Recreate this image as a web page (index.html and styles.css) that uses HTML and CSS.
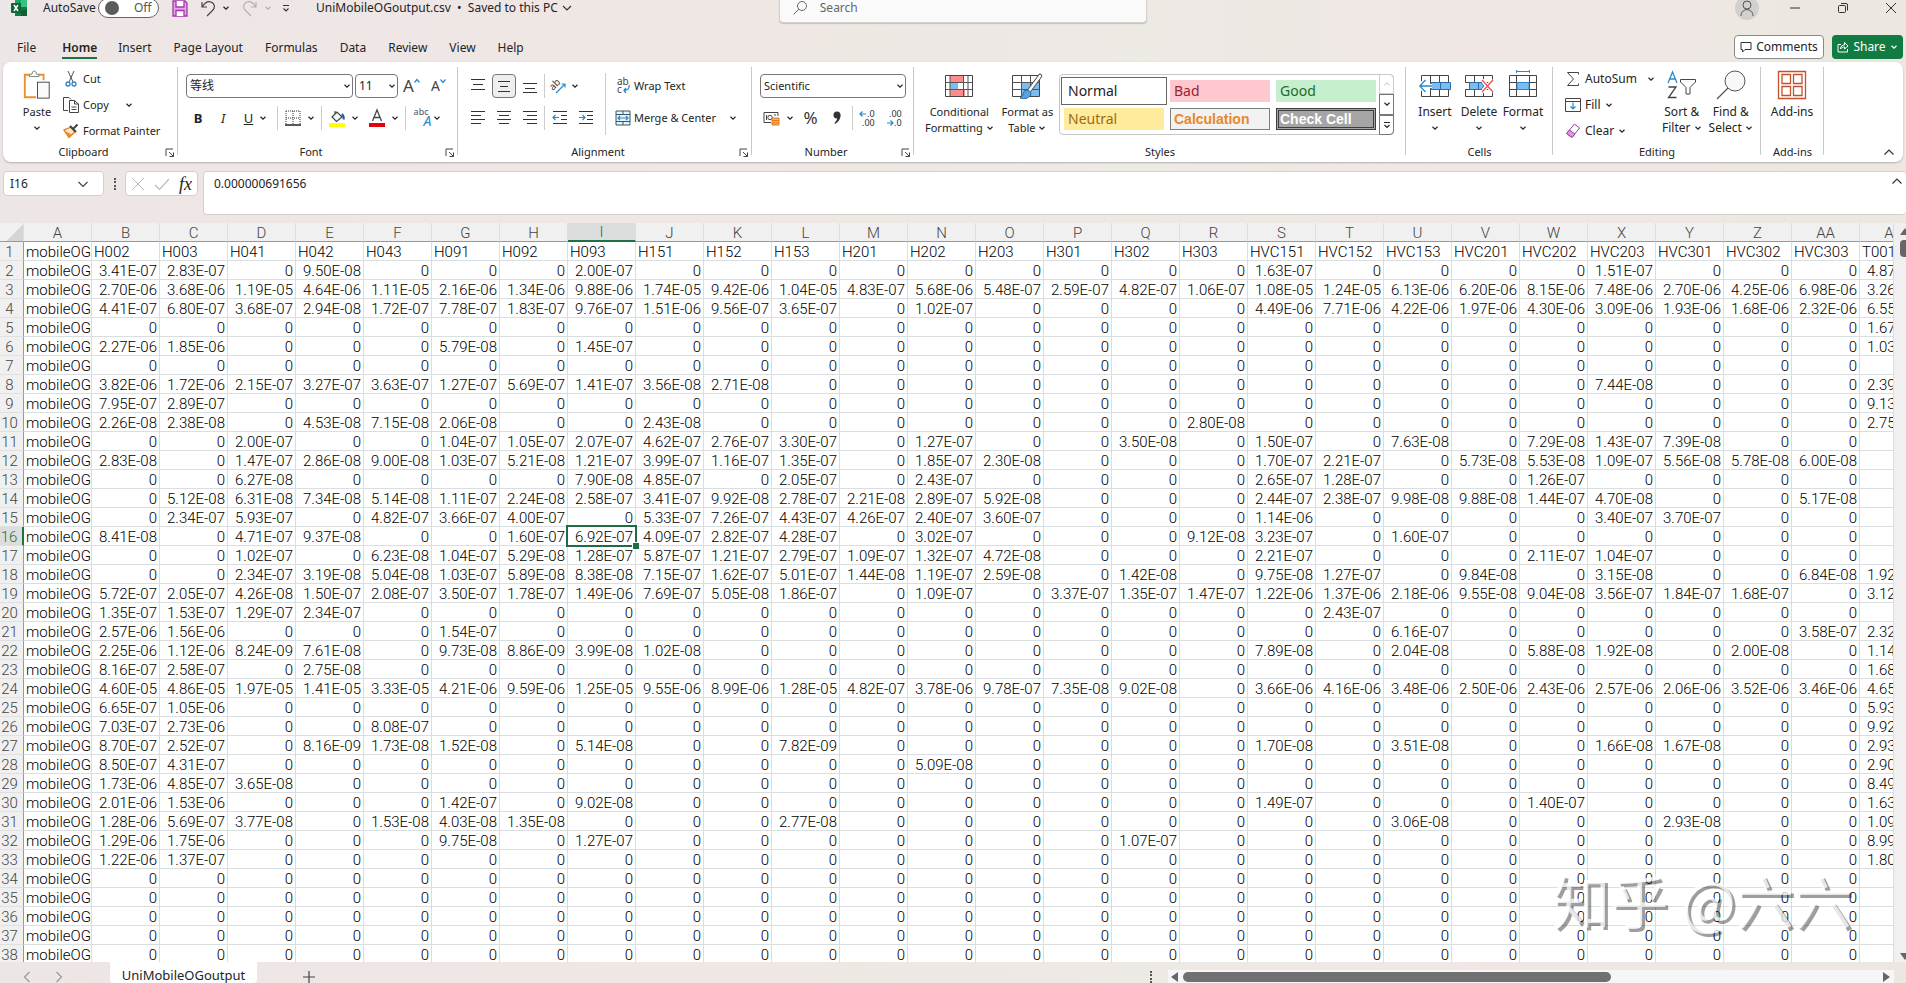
FILE: index.html
```html
<!DOCTYPE html>
<html lang="en">
<head>
<meta charset="utf-8">
<title>UniMobileOGoutput.csv</title>
<link rel="stylesheet" href="styles.css">
</head>
<body>
<svg class="defs" aria-hidden="true">
  <symbol id="caret" viewBox="0 0 8 8"><path d="M1.5 2.8 4 5.2 6.5 2.8" fill="none" stroke="currentColor" stroke-width="1.2"/></symbol>
  <symbol id="launch" viewBox="0 0 10 10"><path d="M1 8V1H8M4 4 8.5 8.5M8.5 4.5V8.5H4.5" fill="none" stroke="#444"/></symbol>
</svg>

<header class="titlebar">
  <svg class="logo" width="16" height="20" viewBox="0 0 16 20"><rect x="4" y="0" width="12" height="18" rx="1" fill="#21a366"/><rect x="10" y="0" width="6" height="9" fill="#33c481"/><rect x="4" y="9" width="12" height="9" fill="#107c41"/><rect x="10" y="12" width="6" height="6" fill="#185c37"/><rect x="0" y="5" width="10" height="10" rx="1" fill="#0e6537"/><path d="M3 7 7 13M7 7 3 13" stroke="#fff" stroke-width="1.5"/></svg>
  <label class="autosave" for="autosave">AutoSave</label>
  <button class="switch" id="autosave" type="button" role="switch" aria-checked="false"><span class="knob"></span>Off</button>
  <button class="tool save" type="button" aria-label="Save"><svg width="16" height="17" viewBox="0 0 16 17"><path d="M1 1H13L15 3V16H1Z" fill="#e3a5e3" stroke="#a238ad" stroke-width="1.3"/><path d="M4 1V7H12V1M4 16V10.500H12V16" fill="#fff" stroke="#a238ad" stroke-width="1.3"/></svg></button>
  <button class="tool undo" type="button" aria-label="Undo"><svg width="16" height="18" viewBox="0 0 16 18"><path d="M2 3V8H7M2.500 7.500C5 3.500 8 2 11 3C15.500 5 15 9 12.500 11.500L7 17" fill="none" stroke="#444" stroke-width="1.2"/></svg><svg width="8" height="8"><use href="#caret"/></svg></button>
  <button class="tool redo" type="button" aria-label="Redo"><svg width="16" height="18" viewBox="0 0 16 18"><path d="M14 3V8H9M13.500 7.500C11 3.500 8 2 5 3C.5 5 1 9 3.500 11.500L9 17" fill="none" stroke="#b5b0b0" stroke-width="1.2"/></svg><svg width="8" height="8"><use href="#caret"/></svg></button>
  <button class="tool more" type="button" aria-label="Customize toolbar"><svg width="10" height="10" viewBox="0 0 10 10"><path d="M2 2.500H8M2.500 5.500 5 8 7.500 5.500" fill="none" stroke="#333" stroke-width="1.1"/></svg></button>
  <button class="docname" type="button">UniMobileOGoutput.csv&nbsp; • &nbsp;Saved to this PC <svg width="10" height="10" viewBox="0 0 10 10"><path d="M1 3 5 7 9 3" fill="none" stroke="#333" stroke-width="1.2"/></svg></button>
  <div class="search">
    <svg width="16" height="16" viewBox="0 0 16 16"><circle cx="10" cy="6" r="4.500" fill="none" stroke="#666"/><path d="M6.800 9.200 1.500 14.500" stroke="#666"/></svg>
    <input type="text" placeholder="Search" aria-label="Search">
  </div>
  <div class="window">
    <button class="avatar" type="button" aria-label="Account"><svg width="24" height="24" viewBox="0 0 24 24"><circle cx="12" cy="12" r="12" fill="#d2d0cf"/><circle cx="12" cy="9" r="4" fill="none" stroke="#555"/><path d="M6 20C6 11.500 18 11.500 18 20" fill="none" stroke="#555"/></svg></button>
    <button type="button" aria-label="Minimize"><svg width="12" height="12" viewBox="0 0 12 12"><path d="M1 6H11" stroke="#333"/></svg></button>
    <button type="button" aria-label="Restore"><svg width="12" height="12" viewBox="0 0 12 12"><rect x="1.500" y="3.500" width="7" height="7" rx="1" fill="none" stroke="#333"/><path d="M4 1.500H9Q10.500 1.500 10.500 3V8.500" fill="none" stroke="#333"/></svg></button>
    <button type="button" aria-label="Close"><svg width="12" height="12" viewBox="0 0 12 12"><path d="M1 1 11 11M11 1 1 11" stroke="#333"/></svg></button>
  </div>
</header>

<nav class="tabs">
  <button type="button">File</button>
  <button type="button" class="active">Home</button>
  <button type="button">Insert</button>
  <button type="button">Page Layout</button>
  <button type="button">Formulas</button>
  <button type="button">Data</button>
  <button type="button">Review</button>
  <button type="button">View</button>
  <button type="button">Help</button>
  <span class="spacer"></span>
  <button type="button" class="comments"><svg width="12" height="12" viewBox="0 0 12 12"><path d="M1 1.500H11V8.500H5L2.500 11V8.500H1Z" fill="none" stroke="#333"/></svg>Comments</button>
  <button type="button" class="share"><svg width="12" height="12" viewBox="0 0 12 12"><path d="M4 3.500H1V11H10.500V8M3.500 8C3.500 5 5.500 4 7.500 4V1.500L11 5 7.500 8V6C6 6 4.500 6.500 3.500 8Z" fill="none" stroke="#fff"/></svg>Share<svg width="8" height="8"><use href="#caret"/></svg></button>
</nav>

<section class="ribbon">
  <div class="group clipboard">
    <div class="body">
      <button type="button" class="big paste"><svg width="28" height="32" viewBox="0 0 28 32"><path d="M6 5H1V29H13M16 5H21V11" fill="none" stroke="#e8912d" stroke-width="2"/><path d="M2.500 6.500H19.500V12H14V27.500H2.500Z" fill="#fff"/><path d="M6 7V4.500H8.500Q9 1 11 1T13.500 4.500H16V7Z" fill="#fff" stroke="#777"/><rect x="14.500" y="13" width="12.500" height="17" fill="#fafafa" stroke="#444"/></svg><span>Paste</span><svg width="8" height="8"><use href="#caret"/></svg></button>
      <div class="stack">
        <button type="button"><svg width="16" height="16" viewBox="0 0 16 16"><path d="M5 0 10 11M11 0 6 11" stroke="#555" fill="none"/><circle cx="5" cy="13" r="2" fill="none" stroke="#2b88c8" stroke-width="1.300"/><circle cx="11" cy="13" r="2" fill="none" stroke="#2b88c8" stroke-width="1.300"/></svg>Cut</button>
        <button type="button"><svg width="16" height="16" viewBox="0 0 16 16"><path d="M5 13.500H.5V.5H6L8 2.500" fill="none" stroke="#444"/><path d="M6.500 3.500H11.500L15.500 7V15.500H6.500ZM11.500 3.500V7H15.500M8.500 10H13.500M8.500 12.500H13.500" fill="none" stroke="#444"/></svg>Copy<svg class="far" width="8" height="8"><use href="#caret"/></svg></button>
        <button type="button"><svg width="16" height="16" viewBox="0 0 16 16"><path d="M8 4 1 7 6 14.500 12 9Z" fill="#fbe3c6" stroke="#e07a1a" stroke-width="1.300"/><path d="M2 8 6 14.500 9 11.500Z" fill="#e8912d"/><path d="M7 3 13 9M10 6 14.500 1.500" stroke="#444" stroke-width="2"/></svg>Format Painter</button>
      </div>
    </div>
    <div class="caption launcher">Clipboard<svg width="10" height="10"><use href="#launch"/></svg></div>
  </div>

  <div class="group font">
    <div class="body rows">
      <div class="row">
        <label class="combo face"><select aria-label="Font"><option>等线</option></select><svg width="8" height="8"><use href="#caret"/></svg></label>
        <label class="combo size"><select aria-label="Font size"><option>11</option></select><svg width="8" height="8"><use href="#caret"/></svg></label>
        <button type="button" class="ic grow" aria-label="Increase font size"><span>A</span><svg width="6" height="6" viewBox="0 0 6 6"><path d="M.5 4.500 3 1.500 5.500 4.500" fill="none" stroke="#2b88c8" stroke-width="1.200"/></svg></button>
        <button type="button" class="ic shrink" aria-label="Decrease font size"><span>A</span><svg width="6" height="6" viewBox="0 0 6 6"><path d="M.5 1.500 3 4.500 5.500 1.500" fill="none" stroke="#2b88c8" stroke-width="1.200"/></svg></button>
      </div>
      <div class="row marks">
        <button type="button" class="ic"><b>B</b></button>
        <button type="button" class="ic"><i>I</i></button>
        <button type="button" class="ic split"><u>U</u><svg width="8" height="8"><use href="#caret"/></svg></button>
        <span class="bar"></span>
        <button type="button" class="ic split" aria-label="Borders"><svg width="16" height="16" viewBox="0 0 16 16"><path d="M1 1H15M1 1V14M15 1V14M8 1V14M1 8H15" fill="none" stroke="#333" stroke-dasharray="1 1"/><path d="M0 15H16" stroke="#222" stroke-width="1.500"/></svg><svg width="8" height="8"><use href="#caret"/></svg></button>
        <span class="bar"></span>
        <button type="button" class="ic split" aria-label="Fill color"><svg width="16" height="18" viewBox="0 0 16 18"><path d="M6 2V5M3 8 8 3 13 8 7.500 12.500Z" fill="#f5f5f5" stroke="#444" stroke-width="1.200"/><path d="M13 5Q15.500 8 14.500 10.500" fill="none" stroke="#2455a4" stroke-width="2"/><rect y="14" width="16" height="4" fill="#ff0"/></svg><svg width="8" height="8"><use href="#caret"/></svg></button>
        <button type="button" class="ic split" aria-label="Font color"><svg width="16" height="18" viewBox="0 0 16 18"><path d="M3.500 12 8 1 12.500 12M5 8.500H11" fill="none" stroke="#444" stroke-width="1.300"/><rect y="14" width="16" height="4" fill="#e3000b"/></svg><svg width="8" height="8"><use href="#caret"/></svg></button>
        <span class="bar"></span>
        <button type="button" class="ic split phonetic" aria-label="Phonetic guide"><span class="abc">abc</span><i class="blue">A</i><svg width="8" height="8"><use href="#caret"/></svg></button>
      </div>
    </div>
    <div class="caption launcher">Font<svg width="10" height="10"><use href="#launch"/></svg></div>
  </div>

  <div class="group alignment">
    <div class="body">
      <div class="rows">
        <div class="row">
          <button type="button" class="al" aria-label="Top align"><svg width="14" height="14" viewBox="0 0 14 14"><path d="M0 .5H14M2 5.500H12M0 10.500H14" stroke="#333"/></svg></button>
          <button type="button" class="al on" aria-label="Middle align"><svg width="14" height="14" viewBox="0 0 14 14"><path d="M1 2.500H13M3 7.500H11M1 12.500H13" stroke="#333"/></svg></button>
          <button type="button" class="al" aria-label="Bottom align"><svg width="14" height="14" viewBox="0 0 14 14"><path d="M0 4.500H14M2 9.500H12M0 13.500H14" stroke="#333"/></svg></button>
          <span class="bar"></span>
          <button type="button" class="al wide" aria-label="Orientation"><svg width="16" height="16" viewBox="0 0 16 16"><path d="M5 15 14 6M10.500 6H14V9.500" fill="none" stroke="#2b88c8" stroke-width="1.200"/><text x="-1" y="10" font-size="10" transform="rotate(-45 4 8)" fill="#444">ab</text></svg><svg width="8" height="8"><use href="#caret"/></svg></button>
        </div>
        <div class="row">
          <button type="button" class="al" aria-label="Align left"><svg width="14" height="14" viewBox="0 0 14 14"><path d="M0 .5H14M0 4.500H10M0 8.500H14M0 12.500H10" stroke="#333"/></svg></button>
          <button type="button" class="al" aria-label="Center"><svg width="14" height="14" viewBox="0 0 14 14"><path d="M0 .5H14M2 4.500H12M0 8.500H14M2 12.500H12" stroke="#333"/></svg></button>
          <button type="button" class="al" aria-label="Align right"><svg width="14" height="14" viewBox="0 0 14 14"><path d="M0 .5H14M4 4.500H14M0 8.500H14M4 12.500H14" stroke="#333"/></svg></button>
          <span class="bar"></span>
          <button type="button" class="al" aria-label="Decrease indent"><svg width="16" height="14" viewBox="0 0 16 14"><path d="M1 .5H15M9 4.500H15M9 8.500H15M1 12.500H15" stroke="#333"/><path d="M7 6.500H1M3.500 4 1 6.500 3.500 9" fill="none" stroke="#2b88c8" stroke-width="1.200"/></svg></button>
          <button type="button" class="al" aria-label="Increase indent"><svg width="16" height="14" viewBox="0 0 16 14"><path d="M1 .5H15M9 4.500H15M9 8.500H15M1 12.500H15" stroke="#333"/><path d="M1 6.500H7M4.500 4 7 6.500 4.500 9" fill="none" stroke="#2b88c8" stroke-width="1.200"/></svg></button>
        </div>
      </div>
      <span class="bar tall"></span>
      <div class="rows merge">
        <button type="button" class="line"><svg width="16" height="18" viewBox="0 0 16 18"><text x="2" y="8" font-size="10" fill="#444">ab</text><text x="2" y="16" font-size="10" fill="#444">c</text><path d="M14 8Q15 13 9 13.500M11 11 9 13.500 11 16" fill="none" stroke="#2b88c8" stroke-width="1.300"/></svg>Wrap Text</button>
        <button type="button" class="line"><svg width="16" height="16" viewBox="0 0 16 16"><path d="M1 1H15V15H1ZM1 4.500H15M1 11.500H15M8 1V4.500M8 11.500V15" fill="#eaf4fb" stroke="#33566b"/><path d="M3 8H13M5 6 3 8 5 10M11 6 13 8 11 10" fill="none" stroke="#2b88c8" stroke-width="1.200"/></svg>Merge &amp; Center<svg class="far" width="8" height="8"><use href="#caret"/></svg></button>
      </div>
    </div>
    <div class="caption launcher">Alignment<svg width="10" height="10"><use href="#launch"/></svg></div>
  </div>

  <div class="group number">
    <div class="body rows">
      <label class="combo"><select aria-label="Number format"><option>Scientific</option></select><svg width="8" height="8"><use href="#caret"/></svg></label>
      <div class="row formats">
        <button type="button" class="ic split" aria-label="Accounting format"><svg width="17" height="15" viewBox="0 0 17 15"><path d="M8 11.500H1V1.500H15V5" fill="none" stroke="#444"/><circle cx="7" cy="6.500" r="2.200" fill="none" stroke="#444"/><path d="M3.500 4V9M11 4H13" stroke="#444"/><path d="M9 7V14H16V7Z" fill="#f6b26b" stroke="#e07a1a"/><path d="M9 9.500H16M9 12H16" stroke="#e07a1a"/></svg><svg width="8" height="8"><use href="#caret"/></svg></button>
        <button type="button" class="ic pct">%</button>
        <button type="button" class="ic" aria-label="Comma style"><svg width="10" height="14" viewBox="0 0 10 14"><circle cx="5" cy="4" r="3.500" fill="#333"/><path d="M8.500 4Q8.500 10 3 13L2.500 12Q5.500 9.500 5.500 6Z" fill="#333"/></svg></button>
        <span class="bar"></span>
        <button type="button" class="ic" aria-label="Increase decimal"><svg width="16" height="18" viewBox="0 0 16 18"><text x="8" y="8" font-size="9" fill="#333">.0</text><text x="3" y="17" font-size="9" fill="#333">.00</text><path d="M7 5H1M3.500 2.500 1 5 3.500 7.500" fill="none" stroke="#2b88c8" stroke-width="1.200"/></svg></button>
        <button type="button" class="ic" aria-label="Decrease decimal"><svg width="16" height="18" viewBox="0 0 16 18"><text x="3" y="8" font-size="9" fill="#333">.00</text><text x="8" y="17" font-size="9" fill="#333">.0</text><path d="M1 14H7M4.500 11.500 7 14 4.500 16.500" fill="none" stroke="#2b88c8" stroke-width="1.200"/></svg></button>
      </div>
    </div>
    <div class="caption launcher">Number<svg width="10" height="10"><use href="#launch"/></svg></div>
  </div>

  <div class="group styles">
    <div class="body">
      <button type="button" class="big cond"><svg width="28" height="28" viewBox="0 0 28 28"><path d="M.5 4.500H27.500V25.500H.5Z" fill="#fff" stroke="#444"/><path d="M5 5H18V11H5ZM5 19H20V25H5Z" fill="#ff8c8c"/><path d="M5 12H13V18H5Z" fill="#7cbcf0"/><path d="M.5 11.500H27.500M.5 18.500H27.500M5 4.500V25.500M18.500 4.500V25.500M23 4.500V25.500" fill="none" stroke="#555"/></svg><span>Conditional</span><span>Formatting <svg width="8" height="8"><use href="#caret"/></svg></span></button>
      <button type="button" class="big"><svg width="30" height="28" viewBox="0 0 30 28"><path d="M.5 4.500H27.500V25.500H.5Z" fill="#fff" stroke="#444"/><path d="M10 11H27V25H10Z" fill="#7cbcf0"/><path d="M.5 11.500H27.500M.5 18.500H27.500M9.500 4.500V25.500M18.500 4.500V25.500" fill="none" stroke="#555"/><path d="M28 5 17 20" stroke="#555" stroke-width="4.500" stroke-linecap="round"/><path d="M28 5 17 20" stroke="#fff" stroke-width="2.500" stroke-linecap="round"/><path d="M15 19Q20 20 18.500 24.500 15 29 8 27 11.500 25 11.500 22T15 19Z" fill="#5ba3dc" stroke="#2b6ea8"/></svg><span>Format as</span><span>Table <svg width="8" height="8"><use href="#caret"/></svg></span></button>
      <div class="gallery">
        <div class="swatches">
          <button type="button" class="normal">Normal</button>
          <button type="button" class="bad">Bad</button>
          <button type="button" class="good">Good</button>
          <button type="button" class="neutral">Neutral</button>
          <button type="button" class="calc">Calculation</button>
          <button type="button" class="check">Check Cell</button>
        </div>
        <div class="steps">
          <button type="button" class="off" aria-label="Previous styles"><svg width="8" height="8" viewBox="0 0 8 8"><path d="M1.500 5.200 4 2.800 6.500 5.200" fill="none" stroke="currentColor"/></svg></button>
          <button type="button" aria-label="Next styles"><svg width="8" height="8"><use href="#caret"/></svg></button>
          <button type="button" aria-label="All styles"><svg width="8" height="10" viewBox="0 0 8 10"><path d="M1 2.500H7M1.500 5 4 7.500 6.500 5" fill="none" stroke="currentColor" stroke-width="1.200"/></svg></button>
        </div>
      </div>
    </div>
    <div class="caption">Styles</div>
  </div>

  <div class="group cells">
    <div class="body">
      <button type="button" class="big"><svg width="32" height="28" viewBox="0 0 32 28"><path d="M2.500 4.500H29.500V25.500H2.500ZM11.500 4.500V25.500M20.500 4.500V25.500" fill="#fff" stroke="#444"/><path d="M12 11.500H31.500V18.500H12Z" fill="#7cbcf0" stroke="#2b6ea8"/><path d="M21.500 11.500V18.500" stroke="#2b6ea8"/><path d="M1 15H13M6.500 9 .8 15 6.500 21" fill="none" stroke="#fff" stroke-width="4"/><path d="M1 15H13M6.500 9 .8 15 6.500 21" fill="none" stroke="#2b88c8" stroke-width="1.300"/></svg><span>Insert</span><svg width="8" height="8"><use href="#caret"/></svg></button>
      <button type="button" class="big"><svg width="32" height="28" viewBox="0 0 32 28"><path d="M2.500 4.500H29.500V11.500H2.500ZM2.500 18.500H29.500V25.500H2.500ZM11.500 4.500V11.500M20.500 4.500V11.500M11.500 18.500V25.500M20.500 18.500V25.500" fill="#fff" stroke="#444"/><path d="M6.500 11.500H18L21 15 18 18.500H6.500ZM15.500 11.500V18.500" fill="#7cbcf0" stroke="#2b6ea8"/><path d="M19 9 30 21M30 9 19 21" stroke="#fff" stroke-width="3.500"/><path d="M19 9 30 21M30 9 19 21" stroke="#ef5350" stroke-width="1.300"/></svg><span>Delete</span><svg width="8" height="8"><use href="#caret"/></svg></button>
      <button type="button" class="big"><svg width="28" height="28" viewBox="0 0 28 28"><path d="M.5 4.500H27.500V25.500H.5ZM.5 11.500H27.500M.5 18.500H27.500M7.500 4.500V25.500M20.500 4.500V25.500" fill="#fff" stroke="#444"/><path d="M8 11.500H20V18.500H8Z" fill="#7cbcf0" stroke="#2b88c8"/><path d="M7 .5H21M7.500 -1V2M20.500 -1V2" stroke="#2b88c8"/></svg><span>Format</span><svg width="8" height="8"><use href="#caret"/></svg></button>
    </div>
    <div class="caption">Cells</div>
  </div>

  <div class="group editing">
    <div class="body">
      <div class="stack">
        <button type="button"><svg width="16" height="16" viewBox="0 0 16 16"><path d="M13.500 3.500V1.500H2.500L8.500 8 2.500 14.500H13.500V12.500" fill="none" stroke="#444"/></svg>AutoSum<svg class="far" width="8" height="8"><use href="#caret"/></svg></button>
        <button type="button"><svg width="16" height="16" viewBox="0 0 16 16"><path d="M.5 1.500H15.500V14.500H.5ZM.5 4.500H15.500" fill="none" stroke="#444"/><path d="M8 5.500V12M5.500 9.500 8 12 10.500 9.500" fill="none" stroke="#2b88c8" stroke-width="1.200"/></svg>Fill<svg width="8" height="8"><use href="#caret"/></svg></button>
        <button type="button"><svg width="16" height="16" viewBox="0 0 16 16"><path d="M9.500 1 14.500 5 7 14.500 1.500 10.500Z" fill="#fff" stroke="#9a3fa5"/><path d="M4.500 7 10 11 7 14.500 1.500 10.500Z" fill="#d99ae0" stroke="#9a3fa5"/></svg>Clear<svg width="8" height="8"><use href="#caret"/></svg></button>
      </div>
      <button type="button" class="big sort"><svg width="30" height="28" viewBox="0 0 30 28"><path d="M1 12 5.500 1 10 12M2.500 8H8.500" fill="none" stroke="#2b88c8" stroke-width="1.300"/><path d="M1.500 16H9L1.500 26.500H9.500" fill="none" stroke="#444" stroke-width="1.300"/><path d="M13.500 8.500H28.500V11L23 16.500V23H19V16.500L13.500 11Z" fill="#fff" stroke="#444"/></svg><span>Sort &amp;</span><span>Filter <svg width="8" height="8"><use href="#caret"/></svg></span></button>
      <button type="button" class="big"><svg width="30" height="30" viewBox="0 0 30 30"><circle cx="19" cy="11" r="10" fill="#f8f8f8" stroke="#555"/><path d="M12 18 1 29" stroke="#555" stroke-width="1.200"/></svg><span>Find &amp;</span><span>Select <svg width="8" height="8"><use href="#caret"/></svg></span></button>
    </div>
    <div class="caption">Editing</div>
  </div>

  <div class="group addins">
    <div class="body">
      <button type="button" class="big"><svg width="28" height="28" viewBox="0 0 28 28"><path d="M.5 .5H27.500V27.500H.5ZM4 3.500H12.500V12.500H4ZM15.500 3.500H24V12.500H15.500ZM4 15.500H12.500V24.500H4ZM15.500 15.500H24V24.500H15.500Z" fill="#fff" stroke="#c4512d" stroke-width="1.300"/></svg><span>Add-ins</span></button>
    </div>
    <div class="caption">Add-ins</div>
  </div>
  <button type="button" class="collapse" aria-label="Collapse the ribbon"><svg width="12" height="12" viewBox="0 0 12 12"><path d="M1.500 8.500 6 4 10.500 8.500" fill="none" stroke="#333" stroke-width="1.200"/></svg></button>
</section>

<section class="formula">
  <label class="namebox"><input type="text" value="I16" aria-label="Name box"><svg width="12" height="12" viewBox="0 0 12 12"><path d="M1.500 4 6 8.500 10.500 4" fill="none" stroke="#444" stroke-width="1.200"/></svg></label>
  <span class="dots"></span>
  <div class="fx">
    <button type="button" aria-label="Cancel"><svg width="14" height="14" viewBox="0 0 14 14"><path d="M1 1 13 13M13 1 1 13" stroke="#bbb"/></svg></button>
    <button type="button" aria-label="Enter"><svg width="16" height="14" viewBox="0 0 16 14"><path d="M1 8 5.500 12.500 15 2" fill="none" stroke="#bbb" stroke-width="1.200"/></svg></button>
    <button type="button" class="fn" aria-label="Insert function"><i>fx</i></button>
  </div>
  <div class="entry">
    <input type="text" value="0.000000691656" aria-label="Formula bar">
    <button type="button" aria-label="Collapse formula bar"><svg width="12" height="12" viewBox="0 0 12 12"><path d="M1.500 8.500 6 4 10.500 8.500" fill="none" stroke="#333" stroke-width="1.200"/></svg></button>
  </div>
</section>

<main class="sheet">
  <div class="grid-view"><table class="grid" id="grid"></table></div>
  <div class="vscroll"><span class="arrow up"></span><span class="thumb"></span><span class="arrow down"></span></div>
  <div class="watermark">知乎 @六六</div>
</main>

<footer class="sheetbar">
  <button type="button" aria-label="Previous sheet"><svg width="8" height="12" viewBox="0 0 8 12"><path d="M6.500 1 1.500 6 6.500 11" fill="none" stroke="#999" stroke-width="1.200"/></svg></button>
  <button type="button" aria-label="Next sheet"><svg width="8" height="12" viewBox="0 0 8 12"><path d="M1.500 1 6.500 6 1.500 11" fill="none" stroke="#999" stroke-width="1.200"/></svg></button>
  <button type="button" class="sheet-tab">UniMobileOGoutput</button>
  <button type="button" class="add" aria-label="New sheet"><svg width="12" height="12" viewBox="0 0 12 12"><path d="M6 0V12M0 6H12" stroke="#444" stroke-width="1.200"/></svg></button>
  <span class="spacer"></span>
  <span class="dots"></span>
  <div class="hscroll"><span class="arrow left"></span><span class="thumb"></span><span class="arrow right"></span></div>
</footer>
<script src="grid.js"></script>
</body>
</html>
```
FILE: styles.css
```css
* { box-sizing: border-box; }

body {
  margin: 0;
  height: 100vh;
  display: flex;
  flex-direction: column;
  overflow: hidden;
  font: 12px/16px "Noto Sans", "Noto Sans CJK SC", sans-serif;
  color: #242424;
  background: linear-gradient(90deg, #ede6e6, #efe7e4 30%, #ede9e3 60%, #f0e7e5 78%, #ece7e1);
}

button, input, select {
  font: inherit;
  color: inherit;
  border: 0;
  background: none;
  padding: 0;
  margin: 0;
}

button {
  display: flex;
  align-items: center;
  justify-content: center;
  white-space: nowrap;
}

svg { flex: none; overflow: visible; }
.defs { display: none; }
.spacer { flex: 1; }

/* Title bar */
.titlebar {
  height: 16px;
  display: flex;
  align-items: center;
  padding: 0 9px 0 11px;
  flex: none;
}
.autosave { width: 55px; margin-left: 16px; }
.switch {
  width: 61px;
  height: 20px;
  gap: 15px;
  justify-content: flex-start;
  padding-left: 6px;
  border: 1px solid #666;
  border-radius: 10px;
  background: #fff;
  color: #555;
}
.knob { width: 14px; height: 14px; border-radius: 50%; background: #5c5c5c; }
.tool { gap: 6px; }
.save { margin-left: 13px; }
.undo { margin-left: 12px; }
.redo { margin-left: 12px; }
.redo svg:last-child { color: #b5b0b0; }
.more { margin-left: 9px; }
.docname { margin-left: 25px; gap: 4px; }
.search {
  width: 368px;
  height: 30px;
  margin-left: 207px;
  padding: 0 12px;
  display: flex;
  align-items: center;
  gap: 12px;
  background: #fafafa;
  border: 1px solid #d5d0ce;
  border-radius: 4px;
  box-shadow: 0 1px 1px #c4bfbd;
}
.search input { flex: 1; }
.search input::placeholder { color: #666; opacity: 1; }
.window { margin-left: auto; display: flex; gap: 36px; }
.window .avatar { margin-right: -6px; }

/* Ribbon tabs */
.tabs {
  height: 30px;
  margin-top: 16px;
  padding: 0 3px 0 17px;
  display: flex;
  align-items: center;
  gap: 22px;
  flex: none;
}
.tabs button { height: 24px; border-bottom: 2px solid transparent; border-top: 4px solid transparent; }
.tabs .active { font-weight: 600; border-bottom-color: #1e7145; margin: 0 -1px 0 4px; }
.tabs .comments, .tabs .share { height: 24px; gap: 4px; border-radius: 4px; }
.tabs .comments { width: 90px; border: 1px solid #8a8a8a; background: #fff; margin-right: -14px; }
.tabs .share { width: 71px; border: 0; background: #107c41; color: #fff; }

/* Ribbon */
.ribbon {
  height: 100px;
  margin: 0 3px;
  display: flex;
  flex: none;
  font-size: 11px;
  background: #fff;
  border-radius: 8px;
  box-shadow: 0 1px 2px #b8b0ad;
}
.group {
  position: relative;
  display: flex;
  flex-direction: column;
  flex: none;
}
.group::after {
  content: "";
  position: absolute;
  top: 5px;
  bottom: 7px;
  right: 0;
  width: 1px;
  background: #c8c8c8;
}
.body { height: 82px; display: flex; }
.caption { text-align: center; position: relative; }
.launcher { padding-right: 14px; }
.caption svg { position: absolute; right: 3px; top: 4px; }

.clipboard { width: 175px; }
.font { width: 280px; }
.alignment { width: 294px; }
.number { width: 162px; }
.styles { width: 492px; }
.cells { width: 147px; }
.editing { width: 208px; }
.addins { width: 63px; }
.cells .body, .editing .body, .addins .body { font-size: 12px; }

.stack { display: flex; flex-direction: column; padding-top: 4px; }
.stack button { height: 26px; gap: 4px; justify-content: flex-start; }
.stack .far { margin-left: 12px; }
.far { margin-left: 8px; }

.big { flex-direction: column; justify-content: flex-start; padding-top: 8px; }
.big > svg:first-child { height: 30px; margin-bottom: 4px; }
.big > svg:last-child { margin-top: 4px; }
.paste { width: 36px; margin: 0 8px 0 16px; }

.rows { display: flex; flex-direction: column; gap: 8px; padding-top: 12px; }
.row { display: flex; align-items: center; height: 24px; }
.font .rows, .font .body { padding-left: 8px; }
.number .body { padding: 12px 8px 0; }

.combo { position: relative; display: flex; height: 24px; }
.combo select {
  appearance: none;
  width: 100%;
  padding: 0 3px;
  border: 1px solid #777;
  border-radius: 4px;
  background: #fff;
}
.combo svg { position: absolute; right: 2px; top: 8px; }
.face { width: 167px; margin-right: 2px; font-size: 12px; }
.size { width: 43px; font-size: 12px; }

.ic { width: 24px; height: 24px; gap: 6px; }
.ic b, .ic i, .ic u { font-size: 13px; }
.split { width: 36px; }
.grow { font-size: 17px; width: 27px; gap: 0; align-items: flex-start; padding-top: 4px; color: #444; }
.shrink { font-size: 14px; width: 27px; gap: 0; align-items: flex-start; padding-top: 4px; color: #444; }
.bar { width: 1px; height: 24px; background: #ccc; }
.tall { height: 62px; margin-top: 11px; }
.marks { gap: 3px; padding-left: 1px; }
.marks .ic { width: 22px; }
.marks .ic.split { width: 37px; }
.phonetic { gap: 0; }
.phonetic .abc { font-size: 9px; align-self: flex-start; line-height: 12px; color: #555; }
.phonetic .blue { color: #2b88c8; margin: 6px 2px 0 -5px; font-size: 14px; }

.alignment .row { padding-left: 8px; }
.al { width: 24px; height: 24px; margin-right: 2px; gap: 4px; border-radius: 4px; }
.al.on { background: #eee; border: 1px solid #777; }
.alignment .bar { margin-right: 3px; }
.al.wide { width: 34px; }
.alignment .tall { margin: 11px 9px 0 5px; }
.line { height: 24px; gap: 3px; justify-content: flex-start; }
.line .far { margin-left: 10px; }

.formats { justify-content: space-between; }
.pct { font-size: 17px; color: #333; }

.cond { margin: 0 8px 0 11px; }
.gallery {
  display: flex;
  flex: none;
  width: 335px;
  height: 61px;
  margin: 12px 0 0 auto;
  border: 1px solid #c6c6c6;
  border-radius: 4px;
}
.styles .body { padding-right: 12px; }
.swatches {
  flex: 1;
  display: grid;
  grid-template-columns: repeat(3, 1fr);
  gap: 6px 6px;
  padding: 5px 4px;
}
.swatches button { justify-content: flex-start; padding-left: 4px; font-size: 14px; height: 22px; }
.normal { outline: 1px solid #666; outline-offset: 2px; }
.bad { background: #ffc7ce; color: #9c2230; }
.good { background: #c6efce; color: #1e6b2a; }
.neutral { background: #ffeb9c; color: #9c6a12; }
.swatches .calc, .swatches .check { font: 700 14px/16px "Liberation Sans", sans-serif; }
.swatches .calc { background: #f2f2f2; color: #e8872a; border: 1px solid #7f7f7f; padding-left: 3px; }
.swatches .check { background: #a5a5a5; color: #fff; border: 3px double #3f3f3f; padding-left: 1px; }
.steps { width: 15px; display: flex; flex-direction: column; margin: -1px; }
.steps button { flex: 1; border: 1px solid #777; }
.steps .off { color: #bbb; border-color: #ccc; border-radius: 0 4px 0 0; }
.steps button:last-child { border-radius: 0 0 4px 0; }

.cells .body { padding-left: 7px; }
.cells .big { width: 44px; }
.editing .stack { width: 98px; padding-left: 12px; }
.editing .stack .far { margin-left: 6px; }
.sort { margin: 0 7px 0 11px; }
.addins .big { width: 62px; }
.collapse { margin: auto 8px 4px auto; }

/* Formula bar */
.formula {
  display: flex;
  align-items: flex-start;
  padding: 9px 0 8px 3px;
  flex: none;
}
.namebox, .fx, .entry {
  display: flex;
  align-items: center;
  background: #fff;
  border: 1px solid #d4cfcd;
  border-radius: 4px;
}
.namebox { width: 101px; height: 25px; padding: 0 14px 0 6px; }
.namebox input { flex: 1; min-width: 0; }
.dots { border-left: 2px dotted #555; height: 12px; }
.formula .dots { margin: 7px 9px 0 10px; }
.fx { width: 73px; height: 25px; justify-content: space-between; padding: 0 5px; }
.fn { font: 18px/20px "Liberation Serif", serif; }
.entry { flex: 1; height: 44px; margin-left: 5px; padding: 0 3px 0 10px; align-items: flex-start; border-right: 0; }
.entry input { flex: 1; height: 22px; }
.entry button { padding-top: 3px; }

/* Worksheet */
.sheet { flex: 1; min-height: 0; display: flex; position: relative; }
.grid-view { flex: 1; min-width: 0; overflow: hidden; background: #fff; }
.grid {
  table-layout: fixed;
  width: 1928px;
  border-spacing: 0;
  font: 300 15px/15px Roboto, "Noto Sans", sans-serif;
  color: #000;
}
.grid th, .grid td { padding: 3px 2px 0; height: 19px; white-space: nowrap; }
.grid td { text-align: right; border-right: 1px solid #d9dfe0; border-bottom: 1px solid #d9dfe0; }
.grid th { font-weight: 300; color: #444; background: #f0f0f0; text-align: center; }
.grid thead th { border-bottom: 1px solid #999; border-right: 1px solid #dedede; }
.grid tbody th { border-right: 1px solid #999; border-bottom: 1px solid #e0e0e0; padding: 3px 4px 0 0; }
.grid .corner { width: 24px; background: linear-gradient(135deg, #f0f0f0 60%, #d5d5d5 60%); }
.grid td.text { text-align: left; }
.grid thead th.current { background: #dcdedd; color: #1e7145; border-bottom: 2px solid #1e7145; padding-top: 2px; }
.grid tbody th.current { background: #dcdedd; color: #1e7145; border-right: 2px solid #1e7145; }
.grid td.picked { position: relative; }
.grid td.picked::before { content: ""; position: absolute; inset: -2px; border: 2px solid #1e6b45; }
.grid td.picked::after {
  content: "";
  position: absolute;
  right: -4px;
  bottom: -4px;
  width: 6px;
  height: 6px;
  background: #1e6b45;
  border: 1px solid #fff;
  border-width: 1px 0 0 1px;
}
.vscroll {
  width: 13px;
  display: flex;
  flex-direction: column;
  align-items: flex-end;
  overflow: hidden;
  background: #f1efef;
  border-left: 1px solid #ddd;
}
.arrow { border: 5px solid transparent; }
.up { border-top: 0; border-bottom: 7px solid #666; margin: 5px -4px 0 0; }
.down { border-bottom: 0; border-top: 7px solid #666; margin: auto -4px 2px 0; }
.vscroll .thumb { width: 6px; height: 17px; margin-top: 5px; background: #666; border-radius: 4px 0 0 4px; }
.watermark {
  position: absolute;
  right: 54px;
  bottom: 27px;
  font: 58px/72px "Noto Sans CJK SC", sans-serif;
  color: rgba(255, 255, 255, 0.75);
  text-shadow: 3px 3px 0 rgba(0, 0, 0, 0.38);
}

/* Sheet tabs */
.sheetbar { height: 21px; display: flex; align-items: center; flex: none; padding-left: 23px; overflow: hidden; }
.sheetbar > button { height: 21px; padding-top: 8px; }
.sheetbar > button + button { margin-left: 24px; }
.sheetbar .sheet-tab { width: 147px; margin-left: 47px; padding-top: 5px; font-size: 13px; background: #fff; border-radius: 0 0 4px 4px; }
.sheetbar .add { margin-left: 46px; }
.sheetbar .dots { margin: 8px 16px 0 0; }
.hscroll { width: 726px; height: 13px; margin: 8px 12px 0 0; display: flex; align-items: center; background: #f6f6f6; }
.hscroll .thumb { width: 428px; height: 10px; margin-left: 5px; border-radius: 5px; background: #707070; }
.left { border-left: 0; border-right: 7px solid #666; margin-left: 3px; }
.right { border-right: 0; border-left: 7px solid #666; margin: 0 4px 0 auto; }
```
FILE: grid.js
```js
const samples = "H002 H003 H041 H042 H043 H091 H092 H093 H151 H152 H153 H201 H202 H203 H301 H302 H303 HVC151 HVC152 HVC153 HVC201 HVC202 HVC203 HVC301 HVC302 HVC303 T001".split(" ");

// One line per row; "0x9" stands for nine zero cells.
const rows = `
3.41e-7 2.83e-7 0 9.50e-8 0x3 2.00e-7 0x9 1.63e-7 0x4 1.51e-7 0x3 4.87e-7
2.70e-6 3.68e-6 1.19e-5 4.64e-6 1.11e-5 2.16e-6 1.34e-6 9.88e-6 1.74e-5 9.42e-6 1.04e-5 4.83e-7 5.68e-6 5.48e-7 2.59e-7 4.82e-7 1.06e-7 1.08e-5 1.24e-5 6.13e-6 6.20e-6 8.15e-6 7.48e-6 2.70e-6 4.25e-6 6.98e-6 3.26e-6
4.41e-7 6.80e-7 3.68e-7 2.94e-8 1.72e-7 7.78e-7 1.83e-7 9.76e-7 1.51e-6 9.56e-7 3.65e-7 0 1.02e-7 0x4 4.49e-6 7.71e-6 4.22e-6 1.97e-6 4.30e-6 3.09e-6 1.93e-6 1.68e-6 2.32e-6 6.55e-6
0x26 1.67e-7
2.27e-6 1.85e-6 0x3 5.79e-8 0 1.45e-7 0x18 1.03e-7
0x27
3.82e-6 1.72e-6 2.15e-7 3.27e-7 3.63e-7 1.27e-7 5.69e-7 1.41e-7 3.56e-8 2.71e-8 0x12 7.44e-8 0x3 2.39e-7
7.95e-7 2.89e-7 0x24 9.13e-7
2.26e-8 2.38e-8 0 4.53e-8 7.15e-8 2.06e-8 0x2 2.43e-8 0x7 2.80e-8 0x9 2.75e-7
0x2 2.00e-7 0x2 1.04e-7 1.05e-7 2.07e-7 4.62e-7 2.76e-7 3.30e-7 0 1.27e-7 0x2 3.50e-8 0 1.50e-7 0 7.63e-8 0 7.29e-8 1.43e-7 7.39e-8 0x3
2.83e-8 0 1.47e-7 2.86e-8 9.00e-8 1.03e-7 5.21e-8 1.21e-7 3.99e-7 1.16e-7 1.35e-7 0 1.85e-7 2.30e-8 0x3 1.70e-7 2.21e-7 0 5.73e-8 5.53e-8 1.09e-7 5.56e-8 5.78e-8 6.00e-8 0
0x2 6.27e-8 0x4 7.90e-8 4.85e-7 0 2.05e-7 0 2.43e-7 0x4 2.65e-7 1.28e-7 0x2 1.26e-7 0x5
0 5.12e-8 6.31e-8 7.34e-8 5.14e-8 1.11e-7 2.24e-8 2.58e-7 3.41e-7 9.92e-8 2.78e-7 2.21e-8 2.89e-7 5.92e-8 0x3 2.44e-7 2.38e-7 9.98e-8 9.88e-8 1.44e-7 4.70e-8 0x2 5.17e-8 0
0 2.34e-7 5.93e-7 0 4.82e-7 3.66e-7 4.00e-7 0 5.33e-7 7.26e-7 4.43e-7 4.26e-7 2.40e-7 3.60e-7 0x3 1.14e-6 0x4 3.40e-7 3.70e-7 0x3
8.41e-8 0 4.71e-7 9.37e-8 0x2 1.60e-7 6.92e-7 4.09e-7 2.82e-7 4.28e-7 0 3.02e-7 0x3 9.12e-8 3.23e-7 0 1.60e-7 0x7
0x2 1.02e-7 0 6.23e-8 1.04e-7 5.29e-8 1.28e-7 5.87e-7 1.21e-7 2.79e-7 1.09e-7 1.32e-7 4.72e-8 0x3 2.21e-7 0x3 2.11e-7 1.04e-7 0x4
0x2 2.34e-7 3.19e-8 5.04e-8 1.03e-7 5.89e-8 8.38e-8 7.15e-7 1.62e-7 5.01e-7 1.44e-8 1.19e-7 2.59e-8 0 1.42e-8 0 9.75e-8 1.27e-7 0 9.84e-8 0 3.15e-8 0x2 6.84e-8 1.92e-7
5.72e-7 2.05e-7 4.26e-8 1.50e-7 2.08e-7 3.50e-7 1.78e-7 1.49e-6 7.69e-7 5.05e-8 1.86e-7 0 1.09e-7 0 3.37e-7 1.35e-7 1.47e-7 1.22e-6 1.37e-6 2.18e-6 9.55e-8 9.04e-8 3.56e-7 1.84e-7 1.68e-7 0 3.12e-7
1.35e-7 1.53e-7 1.29e-7 2.34e-7 0x14 2.43e-7 0x8
2.57e-6 1.56e-6 0x3 1.54e-7 0x13 6.16e-7 0x5 3.58e-7 2.32e-7
2.25e-6 1.12e-6 8.24e-9 7.61e-8 0 9.73e-8 8.86e-9 3.99e-8 1.02e-8 0x8 7.89e-8 0 2.04e-8 0 5.88e-8 1.92e-8 0 2.00e-8 0 1.14e-7
8.16e-7 2.58e-7 0 2.75e-8 0x22 1.68e-7
4.60e-5 4.86e-5 1.97e-5 1.41e-5 3.33e-5 4.21e-6 9.59e-6 1.25e-5 9.55e-6 8.99e-6 1.28e-5 4.82e-7 3.78e-6 9.78e-7 7.35e-8 9.02e-8 0 3.66e-6 4.16e-6 3.48e-6 2.50e-6 2.43e-6 2.57e-6 2.06e-6 3.52e-6 3.46e-6 4.65e-6
6.65e-7 1.05e-6 0x24 5.93e-7
7.03e-7 2.73e-6 0x2 8.08e-7 0x21 9.92e-7
8.70e-7 2.52e-7 0 8.16e-9 1.73e-8 1.52e-8 0 5.14e-8 0x2 7.82e-9 0x6 1.70e-8 0 3.51e-8 0x2 1.66e-8 1.67e-8 0x2 2.93e-7
8.50e-7 4.31e-7 0x10 5.09e-8 0x13 2.90e-7
1.73e-6 4.85e-7 3.65e-8 0x23 8.49e-7
2.01e-6 1.53e-6 0x3 1.42e-7 0 9.02e-8 0x9 1.49e-7 0x3 1.40e-7 0x4 1.63e-7
1.28e-6 5.69e-7 3.77e-8 0 1.53e-8 4.03e-8 1.35e-8 0x3 2.77e-8 0x8 3.06e-8 0x3 2.93e-8 0x2 1.09e-7
1.29e-6 1.75e-6 0x3 9.75e-8 0 1.27e-7 0x7 1.07e-7 0x10 8.99e-7
1.22e-6 1.37e-7 0x24 1.80e-7
0x27
0x27
0x27
0x27
0x27
`.trim().split("\n");

const columns = [..."ABCDEFGHIJKLMNOPQRSTUVWXYZ", "AA", "AB"];
const active = { row: 16, column: "I" };

function format(token) {
  return token === "0" ? "0" : Number(token).toExponential(2).replace(/e-(\d)$/, "E-0$1");
}

function expand(line) {
  return line.split(" ").flatMap(token => {
    const run = token.match(/^0x(\d+)$/);
    return run ? Array(Number(run[1])).fill("0") : [format(token)];
  });
}

function cell(tag, text, ...classes) {
  const node = document.createElement(tag);
  node.textContent = text;
  node.className = classes.filter(Boolean).join(" ");
  return node;
}

const grid = document.getElementById("grid");
const head = grid.createTHead().insertRow();
head.append(cell("th", "", "corner"));
columns.forEach(name => head.append(cell("th", name, name === active.column && "current")));

const body = grid.createTBody();
[samples, ...rows.map(expand)].forEach((values, index) => {
  const row = body.insertRow();
  const number = index + 1;
  row.append(cell("th", number, number === active.row && "current"));
  row.append(cell("td", "mobileOG", "text"));
  values.forEach((value, i) => {
    const picked = number === active.row && columns[i + 1] === active.column;
    row.append(cell("td", value, index === 0 && "text", picked && "picked"));
  });
});
```
